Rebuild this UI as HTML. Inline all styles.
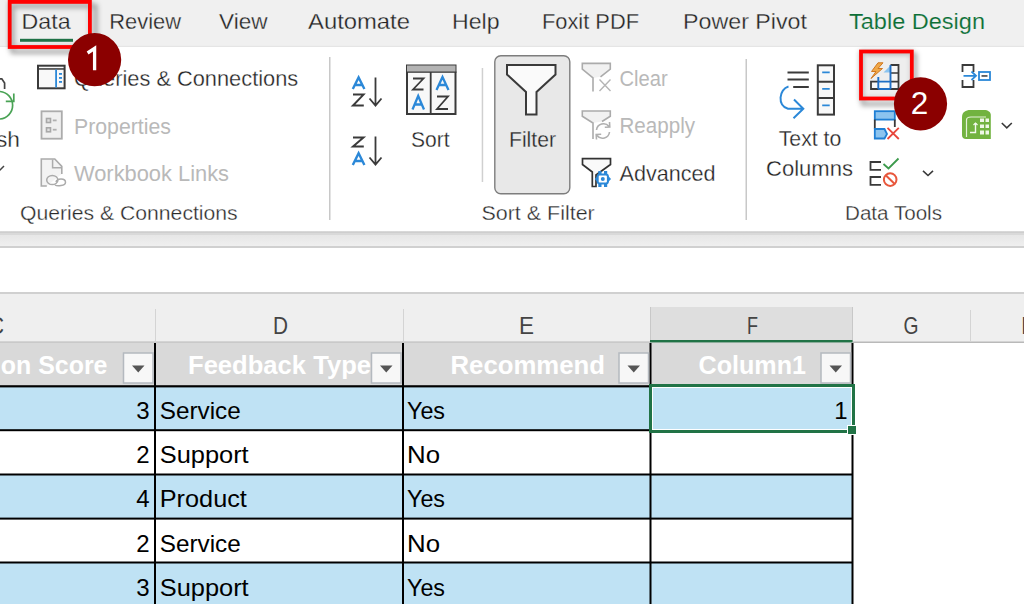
<!DOCTYPE html>
<html><head><meta charset="utf-8"><style>
html,body{margin:0;padding:0;width:1024px;height:604px;overflow:hidden;background:#fff}
svg{display:block}
text{font-family:"Liberation Sans",sans-serif}
.t{fill:#222;font-size:22px;stroke:#fff;stroke-width:0.3px}
.tb{stroke:#f0f0f0;font-size:22.6px}
.g{fill:#b9b9b9;font-size:22px}
.lb{fill:#2a2a2a;font-size:20px;stroke:#fff;stroke-width:0.3px}
.c{fill:#000;font-size:24px}
.h{fill:#fff;font-size:25px;font-weight:bold}
.ch{fill:#444;font-size:24px}
</style></head><body>
<svg width="1024" height="604" viewBox="0 0 1024 604">
<defs>
<linearGradient id="band" x1="0" y1="0" x2="0" y2="1"><stop offset="0" stop-color="#e3e3e3"/><stop offset="1" stop-color="#f0f0f0"/></linearGradient>
<linearGradient id="tg" x1="0" y1="0" x2="0" y2="1"><stop offset="0" stop-color="#bdbdbd"/><stop offset="1" stop-color="#eeeeee" stop-opacity="0"/></linearGradient>
<linearGradient id="lg" x1="0" y1="0" x2="1" y2="0"><stop offset="0" stop-color="#c4c4c4"/><stop offset="1" stop-color="#eeeeee" stop-opacity="0"/></linearGradient>
<filter id="sh" x="-20%" y="-20%" width="150%" height="150%"><feGaussianBlur stdDeviation="2.5"/></filter>
</defs>
<!-- ===== TAB BAR ===== -->
<rect x="0" y="0" width="1024" height="47" fill="#f0f0f0"/>
<rect x="0" y="45.8" width="1024" height="1.6" fill="#e5e5e5"/>
<!-- ===== RIBBON ===== -->
<rect x="0" y="47" width="1024" height="184" fill="#ffffff"/>
<rect x="0" y="231" width="1024" height="16" fill="url(#band)"/>
<rect x="0" y="231.5" width="1024" height="2" fill="#cecece"/>
<rect x="0" y="233.5" width="1024" height="1.5" fill="#d9d9d9"/>
<rect x="0" y="246" width="1024" height="2" fill="#d0d0d0"/>
<!-- formula area -->
<rect x="0" y="248" width="1024" height="44" fill="#ffffff"/>
<rect x="0" y="292" width="1024" height="2" fill="#d0d0d0"/>


<!-- tabs -->
<text class="t tb" x="21.6" y="28.6" textLength="49" lengthAdjust="spacingAndGlyphs">Data</text>
<text class="t tb" x="109.3" y="28.6" textLength="71.7" lengthAdjust="spacingAndGlyphs">Review</text>
<text class="t tb" x="219" y="28.6" textLength="48.5" lengthAdjust="spacingAndGlyphs">View</text>
<text class="t tb" x="308" y="28.6" textLength="102" lengthAdjust="spacingAndGlyphs">Automate</text>
<text class="t tb" x="452" y="28.6" textLength="47.5" lengthAdjust="spacingAndGlyphs">Help</text>
<text class="t tb" x="542" y="28.6" textLength="97" lengthAdjust="spacingAndGlyphs">Foxit PDF</text>
<text class="t tb" x="683" y="28.6" textLength="124" lengthAdjust="spacingAndGlyphs">Power Pivot</text>
<text class="t tb" x="849" y="28.6" textLength="136" lengthAdjust="spacingAndGlyphs" style="fill:#0c6f36;stroke-width:0.15px">Table Design</text>
<rect x="20" y="38.8" width="53" height="3" fill="#1e7145"/>

<!-- ribbon texts -->
<rect x="494.8" y="55.8" width="75" height="138" rx="6" ry="6" fill="#e8e8e8" stroke="#7d7d7d" stroke-width="1.4"/>

<text class="t" x="-4" y="147" textLength="24" lengthAdjust="spacingAndGlyphs">sh</text>
<text class="t" x="74" y="86" textLength="224.2" lengthAdjust="spacingAndGlyphs">Queries &amp; Connections</text>
<text class="g" x="74" y="134" textLength="97" lengthAdjust="spacingAndGlyphs">Properties</text>
<text class="g" x="74" y="181.4" textLength="155" lengthAdjust="spacingAndGlyphs">Workbook Links</text>
<text class="lb" x="20" y="219.5" textLength="217.7" lengthAdjust="spacingAndGlyphs">Queries &amp; Connections</text>
<text class="t" x="411" y="146.8" textLength="38.6" lengthAdjust="spacingAndGlyphs">Sort</text>
<text class="t" style="stroke:#e8e8e8" x="509" y="146.8" textLength="47" lengthAdjust="spacingAndGlyphs">Filter</text>
<text class="g" x="619.5" y="86.4" textLength="48.2" lengthAdjust="spacingAndGlyphs">Clear</text>
<text class="g" x="619.5" y="133.4" textLength="75.5" lengthAdjust="spacingAndGlyphs">Reapply</text>
<text class="t" x="619.5" y="181" textLength="96" lengthAdjust="spacingAndGlyphs">Advanced</text>
<text class="lb" x="481.5" y="219.8" textLength="113.2" lengthAdjust="spacingAndGlyphs">Sort &amp; Filter</text>
<text class="t" x="778.7" y="146" textLength="62.6" lengthAdjust="spacingAndGlyphs">Text to</text>
<text class="t" x="766" y="175.7" textLength="87" lengthAdjust="spacingAndGlyphs">Columns</text>
<text class="lb" x="845" y="219.6" textLength="97" lengthAdjust="spacingAndGlyphs">Data Tools</text>
<!-- separators -->
<rect x="329" y="57" width="1.5" height="163" fill="#c8c8c8"/>
<rect x="481.7" y="68" width="1.5" height="114" fill="#d0d0d0"/>
<rect x="745.5" y="59" width="1.5" height="161" fill="#c8c8c8"/>


<!-- ===== ICONS ===== -->
<!-- refresh partial -->
<path d="M-1 78.8 L1.8 78.8 L4.6 83 L4.6 89" fill="none" stroke="#444" stroke-width="1.7"/>
<path d="M0 91.5 A13.8 13.8 0 0 1 0 119" fill="none" stroke="#4aa355" stroke-width="1.7"/>
<path d="M13.8 93.5 L13.8 101.3 L5.8 101.3" fill="none" stroke="#4aa355" stroke-width="1.7"/>
<path d="M-5 166 L-0.5 170.5 L4 166" fill="none" stroke="#444" stroke-width="1.5"/>
<!-- queries & connections icon -->
<rect x="38" y="65.7" width="26.6" height="22.6" fill="#f9f9f9" stroke="#3a3a3a" stroke-width="2"/>
<rect x="38" y="68.2" width="26.6" height="1.5" fill="#3a3a3a"/>
<rect x="55.2" y="69.5" width="1.8" height="18" fill="#2b88d8"/>
<rect x="59" y="73" width="3" height="1.8" fill="#2b88d8"/>
<rect x="59" y="77" width="3" height="1.8" fill="#2b88d8"/>
<rect x="59" y="81" width="3" height="1.8" fill="#2b88d8"/>
<!-- properties icon -->
<rect x="41.5" y="111.3" width="20.3" height="27.4" fill="#f0f0f0" stroke="#acacac" stroke-width="1.8"/>
<rect x="46.5" y="118.5" width="4" height="4" fill="#e0e0e0" stroke="#a8a8a8" stroke-width="1.6"/>
<rect x="46.5" y="127.8" width="4" height="4" fill="#e0e0e0" stroke="#a8a8a8" stroke-width="1.6"/>
<rect x="52.8" y="119.5" width="3.8" height="1.8" fill="#b0b0b0"/>
<rect x="52.8" y="128.8" width="3.8" height="1.8" fill="#b0b0b0"/>
<!-- workbook links icon -->
<path d="M46.8 186 L41.3 186 L41.3 159 L54.8 159 L61.8 166.4 L61.8 174" fill="#f3f3f3" stroke="#ababab" stroke-width="1.6"/>
<path d="M52.6 159.5 L52.6 167.8 L61.8 167.8" fill="none" stroke="#ababab" stroke-width="1.5"/>
<ellipse cx="52.3" cy="180" rx="5.6" ry="4.6" fill="none" stroke="#ababab" stroke-width="1.5"/>
<path d="M56 182 C57 178 65.5 178 65.5 182.2 C65.5 186 57 186.5 55 185" fill="none" stroke="#ababab" stroke-width="1.5"/>
<!-- sort A-Z -->
<path d="M352.8 89 L358.6 77.5 L364.4 89 M354.8 85 L362.4 85" fill="none" stroke="#2b88d8" stroke-width="2.4"/>
<path d="M353 94.6 L363.5 94.6 L353 105.6 L363.8 105.6" fill="none" stroke="#3a3a3a" stroke-width="2"/>
<path d="M375.5 77.5 L375.5 105.5 M369.5 98.5 L375.5 105.5 L381.5 98.5" fill="none" stroke="#3a3a3a" stroke-width="1.8"/>
<!-- sort Z-A -->
<path d="M353 137.4 L363.5 137.4 L353 146.6 L363.8 146.6" fill="none" stroke="#3a3a3a" stroke-width="2"/>
<path d="M352.8 165 L358.6 153.3 L364.4 165 M354.8 161 L362.4 161" fill="none" stroke="#2b88d8" stroke-width="2.4"/>
<path d="M375.5 136.5 L375.5 164.5 M369.5 157.5 L375.5 164.5 L381.5 157.5" fill="none" stroke="#3a3a3a" stroke-width="1.8"/>
<!-- sort dialog -->
<rect x="407" y="65.5" width="48.5" height="48.5" fill="#f8f8f8" stroke="#3a3a3a" stroke-width="2"/>
<rect x="407" y="65.5" width="48.5" height="6.5" fill="#b3b3b3"/>
<rect x="406" y="71.5" width="50.5" height="1.3" fill="#3a3a3a"/>
<rect x="429.8" y="72" width="1.8" height="42" fill="#3a3a3a"/>
<path d="M413 78.5 L423.5 78.5 L413 89.5 L423.5 89.5" fill="none" stroke="#3a3a3a" stroke-width="1.8"/>
<path d="M412.5 109.5 L418.2 96 L424 109.5 M414.7 104.5 L421.7 104.5" fill="none" stroke="#2b88d8" stroke-width="2.3"/>
<path d="M436.5 90 L442.5 77 L448.5 90 M438.7 85 L446.3 85" fill="none" stroke="#2b88d8" stroke-width="2.3"/>
<path d="M437 96.5 L448 96.5 L437 109 L448 109" fill="none" stroke="#3a3a3a" stroke-width="1.8"/>

<!-- filter button -->
<path d="M507 65 L555.5 65 L555.5 74.5 L536.5 92 L536.5 114.5 L526 114.5 L526 92 L507 74.5 Z" fill="#fafafa" stroke="#3a3a3a" stroke-width="2" stroke-linejoin="miter"/>
<!-- clear icon -->
<path d="M582.3 63.4 L610.3 63.4 L610.3 69.2 L600.5 76.8 L593 78 L582.3 69.2 Z" fill="#f1f1f1"/>
<path d="M593 91.6 L593 78 L582.3 69.2 L582.3 63.4 L610.3 63.4 L610.3 69.2 L600.5 76.8" fill="none" stroke="#ababab" stroke-width="1.6"/>
<path d="M599.5 79.5 L610.5 91 M610.5 79.5 L599.5 91" fill="none" stroke="#b5b5b5" stroke-width="1.4"/>
<!-- reapply icon -->
<path d="M582.3 111 L610.3 111 L610.3 116.2 L602 121.5 L593 123 L582.3 116.2 Z" fill="#f1f1f1"/>
<path d="M593 139 L593 123 L582.3 116.2 L582.3 111 L610.3 111 L610.3 116.2 L602 121.5" fill="none" stroke="#ababab" stroke-width="1.6"/>
<path d="M596.5 130 A7 7 0 0 1 609 126.5 M609.5 122 L609.8 127 L604.8 127.3" fill="none" stroke="#b0b0b0" stroke-width="1.6"/>
<path d="M609.5 132 A7 7 0 0 1 597 135.5 M596.5 139.5 L596.2 134.5 L601.2 134.2" fill="none" stroke="#b0b0b0" stroke-width="1.6"/>
<!-- advanced icon -->
<path d="M582.5 158.6 L610.5 158.6 L610.5 164.5 L596 175 L596 186.5 L592.3 186.5 L592.3 172 L582.5 164.5 Z" fill="#fafafa" stroke="#333" stroke-width="1.7"/>
<g fill="#2b88d8">
<path d="M598.3 171 h3.2 v3 h2.5 v-3 h3.2 v4.2 h-8.9 z"/>
<path d="M598.3 187 h3.2 v-3 h2.5 v3 h3.2 v-4.2 h-8.9 z"/>
<path d="M594.8 179 L598.5 174.8 L598.5 183.2 Z"/>
<path d="M611 179 L607.2 174.8 L607.2 183.2 Z"/>
</g>
<rect x="597.7" y="174.6" width="10.2" height="8.8" rx="2" fill="#fff" stroke="#2b88d8" stroke-width="2"/>
<circle cx="602.8" cy="179" r="2" fill="#2b88d8"/>
<!-- text to columns -->
<path d="M787.5 72.5 L808.8 72.5 M787.5 79.6 L808.8 79.6 M793.2 87 L808.8 87" stroke="#3a3a3a" stroke-width="2"/>
<rect x="817.8" y="65.3" width="16.2" height="49.3" fill="#f8f8f8" stroke="#3a3a3a" stroke-width="2"/>
<path d="M817.8 81.7 L834 81.7 M817.8 98.1 L834 98.1" stroke="#3a3a3a" stroke-width="2"/>
<path d="M822.2 72.4 L829.7 72.4 M822.2 88.9 L829.7 88.9 M822.2 105.4 L829.7 105.4" stroke="#2b88d8" stroke-width="1.8"/>
<path d="M788.5 86.5 C779 89 777 106 788 108.8 L803 108.8 M794 99.5 L803.3 108.8 L793.5 118.3" fill="none" stroke="#2b88d8" stroke-width="2"/>

<!-- flash fill red box -->
<rect x="863" y="55" width="52" height="49" fill="none" stroke="#000" stroke-opacity="0.35" stroke-width="4" filter="url(#sh)"/>
<rect x="861" y="51.5" width="50.8" height="47" fill="#eeeeee"/>
<rect x="862" y="52.5" width="49" height="8" fill="url(#tg)"/>
<rect x="862" y="52.5" width="7" height="45" fill="url(#lg)"/>
<rect x="861" y="51.5" width="50.8" height="47" fill="none" stroke="#c4c4c4" stroke-width="3" filter="url(#sh)"/>
<rect x="861" y="51.5" width="50.8" height="47" fill="none" stroke="#ff0000" stroke-width="3.8"/>
<!-- flash fill icon -->
<rect x="890.5" y="65" width="8" height="24" fill="#f7f7f7"/><rect x="871" y="81.6" width="20" height="7.4" fill="#f7f7f7"/>
<path d="M883.5 72.5 L890.5 65.5 L890.5 72.5 Z" fill="#8cc4ef"/>
<path d="M890.5 65 L898.5 65 L898.5 89 L871 89 L871 81.6 L878.3 81.6" fill="none" stroke="#3a3a3a" stroke-width="1.8"/>
<path d="M890.5 73 L898.3 73 M890.5 81.6 L898.3 81.6" fill="none" stroke="#3a3a3a" stroke-width="1.6"/>
<path d="M878.3 77 L878.3 89 M890.5 65 L890.5 89 M878.3 81.6 L890.5 81.6 M878.3 89 L890.5 89" fill="none" stroke="#1f6fc5" stroke-width="1.9"/>
<path d="M878 62.8 L871.5 71.5 L876 71.5 L871 78.5 L882.5 68.5 L878 68.5 L883 62.8 Z" fill="#f0a848" stroke="#d07820" stroke-width="1"/>
<!-- remove duplicates -->
<rect x="874.8" y="111.2" width="20" height="8.4" fill="#8cc4ef" stroke="#1f7fd4" stroke-width="1.8"/>
<path d="M874.8 119.6 L874.8 128.8 M894.8 119.6 L894.8 127" stroke="#3a3a3a" stroke-width="1.8"/>
<path d="M874.8 129 L884.5 129 L887 134 L884.5 138.5 L874.8 138.5 Z" fill="#8cc4ef" stroke="#1f7fd4" stroke-width="1.8"/>
<path d="M887.5 127.8 L898.8 139 M898.8 127.8 L887.5 139" stroke="#e8473c" stroke-width="1.8"/>
<!-- data validation -->
<path d="M881 162 L870.5 162 L870.5 169.8 L881 169.8 M881 177 L870.5 177 L870.5 184.8 L881 184.8" fill="none" stroke="#3a3a3a" stroke-width="1.8"/>
<path d="M883.5 164 L888.5 168.5 L898.5 158.5" fill="none" stroke="#3c9a4c" stroke-width="1.8"/>
<circle cx="890.2" cy="179.6" r="6.3" fill="#fff" stroke="#e8573c" stroke-width="2"/>
<path d="M886 175.5 L894.5 183.8" stroke="#e8573c" stroke-width="2"/>
<path d="M923 170.8 L928 175.5 L933 170.8" fill="none" stroke="#3a3a3a" stroke-width="1.6"/>
<!-- consolidate -->
<path d="M962.5 72 L962.5 65 L973.5 65 L973.5 72 M962.5 80 L962.5 87 L973.5 87 L973.5 80" fill="none" stroke="#3a3a3a" stroke-width="1.8"/>
<path d="M963.5 75.8 L976 75.8 M971.5 71.5 L976 75.8 L971.5 80" fill="none" stroke="#2b88d8" stroke-width="1.8"/>
<rect x="979" y="72" width="11" height="8" fill="#fff" stroke="#2b88d8" stroke-width="1.8"/>
<rect x="981.5" y="75.2" width="6" height="1.5" fill="#3a3a3a"/>
<!-- data model -->
<path d="M962 117 C962 112 966 110 970 110 L984 110 C988 110 990.8 112 990.8 115 L990.8 139 L966 139 C963.5 139 962 137.5 962 135 Z" fill="#72b340"/>
<path d="M966.5 137 L966.5 120 C966.5 118 968 117 971 117 L986 117" fill="none" stroke="#e4f2d8" stroke-width="1.2"/>
<path d="M980 118.5 h4 v3.5 h-4 z M985.5 118.5 h3.5 v3.5 h-3.5 z M980 124.5 h4 v3.5 h-4 z M985.5 124.5 h3.5 v3.5 h-3.5 z M980 130.5 h4 v4 h-4 z M985.5 130.5 h3.5 v4 h-3.5 z" fill="#eef7e6"/>
<path d="M975.5 123 L975.5 132.5 L970 132.5" fill="none" stroke="#f4faee" stroke-width="1.4"/>
<path d="M973.5 125 L975.5 123 L977.5 125" fill="none" stroke="#f4faee" stroke-width="1.2"/>
<path d="M1001.8 123 L1006.8 127.8 L1011.8 123" fill="none" stroke="#3a3a3a" stroke-width="1.6"/>

<!-- data tab red box -->
<rect x="12.5" y="6" width="83" height="46" fill="none" stroke="#000" stroke-opacity="0.35" stroke-width="4" filter="url(#sh)"/>
<rect x="10" y="2" width="80" height="45" fill="none" stroke="#b8b8b8" stroke-width="3" filter="url(#sh)"/>
<rect x="9.7" y="1.9" width="80.2" height="45.1" fill="none" stroke="#ff0000" stroke-width="3.8"/>

<!-- badges -->
<circle cx="94.6" cy="59.7" r="26.6" fill="#8b0000"/>
<path d="M94.6 70.2 L94.6 48.4 L87.6 53" fill="none" stroke="#fff" stroke-width="3.3" stroke-linejoin="miter"/>
<circle cx="920.5" cy="103.8" r="26.6" fill="#8b0000"/>
<text x="919.6" y="113.9" text-anchor="middle" style="fill:#fff;font-size:31.5px">2</text>

<!-- ===== COLUMN HEADERS ===== -->
<rect x="0" y="294" width="1024" height="48" fill="#efefef"/>
<rect x="650" y="307" width="202" height="35" fill="#dedede"/>
<rect x="0" y="341.5" width="1024" height="1.5" fill="#b9b9b9"/>
<rect x="155" y="309" width="1" height="33" fill="#d4d4d4"/>
<rect x="403" y="309" width="1" height="33" fill="#d4d4d4"/>
<rect x="650" y="307" width="1" height="35" fill="#c8c8c8"/>
<rect x="852" y="307" width="1" height="35" fill="#c8c8c8"/>
<rect x="970" y="310" width="1" height="32" fill="#d4d4d4"/>
<rect x="650" y="340" width="202.5" height="2.8" fill="#217346"/>
<text class="ch" x="-11" y="334" textLength="15" lengthAdjust="spacingAndGlyphs">C</text>
<text class="ch" x="273" y="334" textLength="15" lengthAdjust="spacingAndGlyphs">D</text>
<text class="ch" x="519" y="334" textLength="15" lengthAdjust="spacingAndGlyphs">E</text>
<text class="ch" x="747" y="334" textLength="11" lengthAdjust="spacingAndGlyphs">F</text>
<text class="ch" x="903.5" y="334" textLength="15" lengthAdjust="spacingAndGlyphs">G</text>
<text class="ch" x="1021" y="334">H</text>

<!-- ===== TABLE ===== -->
<rect x="0" y="342.5" width="853" height="43" fill="#d9d9d9"/>
<rect x="0" y="386" width="853" height="44" fill="#bfe2f4"/>
<rect x="0" y="430" width="853" height="44.5" fill="#ffffff"/>
<rect x="0" y="474.5" width="853" height="44.5" fill="#bfe2f4"/>
<rect x="0" y="519" width="853" height="43.5" fill="#ffffff"/>
<rect x="0" y="562.5" width="853" height="42" fill="#bfe2f4"/>
<!-- horizontal borders -->
<rect x="0" y="385.2" width="853" height="2.2" fill="#000"/>
<rect x="0" y="429.2" width="853" height="2" fill="#000"/>
<rect x="0" y="473.5" width="853" height="2" fill="#000"/>
<rect x="0" y="517.6" width="853" height="2" fill="#000"/>
<rect x="0" y="561.5" width="853" height="2" fill="#000"/>
<!-- vertical borders -->
<rect x="154" y="343" width="2" height="262" fill="#000"/>
<rect x="402" y="343" width="2" height="262" fill="#000"/>
<rect x="649.5" y="343" width="2" height="262" fill="#000"/>
<rect x="851.5" y="343" width="2" height="262" fill="#000"/>

<!-- header texts -->
<text class="h" x="-110" y="374" textLength="217.5" lengthAdjust="spacingAndGlyphs">Satisfaction Score</text>
<text class="h" x="188" y="374" textLength="183" lengthAdjust="spacingAndGlyphs">Feedback Type</text>
<text class="h" x="450.5" y="374" textLength="154.5" lengthAdjust="spacingAndGlyphs">Recommend</text>
<text class="h" x="698.5" y="374" textLength="107.5" lengthAdjust="spacingAndGlyphs">Column1</text>
<!-- dropdown buttons -->
<g>
<rect x="123.5" y="353" width="29.5" height="30" fill="#f7f7f7" stroke="#b4b9bf" stroke-width="1.5"/>
<path d="M132 365.5 L144.5 365.5 L138.25 372.5 Z" fill="#555"/>
<rect x="371.5" y="353" width="29.5" height="30" fill="#f7f7f7" stroke="#b4b9bf" stroke-width="1.5"/>
<path d="M380 365.5 L392.5 365.5 L386.25 372.5 Z" fill="#555"/>
<rect x="619" y="353" width="29.5" height="30" fill="#f7f7f7" stroke="#b4b9bf" stroke-width="1.5"/>
<path d="M627.5 365.5 L640 365.5 L633.75 372.5 Z" fill="#555"/>
<rect x="821" y="353" width="29.5" height="30" fill="#f7f7f7" stroke="#b4b9bf" stroke-width="1.5"/>
<path d="M829.5 365.5 L842 365.5 L835.75 372.5 Z" fill="#555"/>
</g>
<!-- data cells -->
<text class="c" x="149.5" y="418.5" text-anchor="end">3</text>
<text class="c" x="159.7" y="418.5" textLength="81" lengthAdjust="spacingAndGlyphs">Service</text>
<text class="c" x="407" y="418.5" textLength="38" lengthAdjust="spacingAndGlyphs">Yes</text>
<text class="c" x="847.5" y="418.5" text-anchor="end">1</text>

<text class="c" x="149.5" y="463" text-anchor="end">2</text>
<text class="c" x="159.7" y="463" textLength="89" lengthAdjust="spacingAndGlyphs">Support</text>
<text class="c" x="407" y="463" textLength="33" lengthAdjust="spacingAndGlyphs">No</text>

<text class="c" x="149.5" y="507" text-anchor="end">4</text>
<text class="c" x="159.7" y="507" textLength="87.2" lengthAdjust="spacingAndGlyphs">Product</text>
<text class="c" x="407" y="507" textLength="38" lengthAdjust="spacingAndGlyphs">Yes</text>

<text class="c" x="149.5" y="551.5" text-anchor="end">2</text>
<text class="c" x="159.7" y="551.5" textLength="81" lengthAdjust="spacingAndGlyphs">Service</text>
<text class="c" x="407" y="551.5" textLength="33" lengthAdjust="spacingAndGlyphs">No</text>

<text class="c" x="149.5" y="595.5" text-anchor="end">3</text>
<text class="c" x="159.7" y="595.5" textLength="89" lengthAdjust="spacingAndGlyphs">Support</text>
<text class="c" x="407" y="595.5" textLength="38" lengthAdjust="spacingAndGlyphs">Yes</text>

<!-- selected cell F row1 -->
<rect x="650.5" y="385.5" width="203" height="46" fill="none" stroke="#217346" stroke-width="3"/>
<rect x="652.5" y="387.5" width="199" height="42" fill="none" stroke="#ffffff" stroke-width="1"/>
<rect x="847.5" y="425.5" width="9" height="9" fill="#217346" stroke="#fff" stroke-width="1"/>

</svg>
</body></html>
